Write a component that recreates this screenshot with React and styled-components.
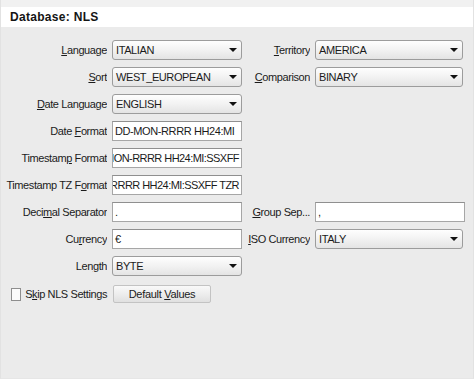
import React from 'react';
import styled, { createGlobalStyle } from 'styled-components';

const Global = createGlobalStyle`
  html, body {
    margin: 0;
    padding: 0;
    background: #ececec;
  }
  body {
    font-family: "Liberation Sans", Arial, sans-serif;
    font-size: 11px;
    color: #1b1b1b;
  }
`;

const Panel = styled.div`
  width: 474px;
  height: 379px;
  box-sizing: border-box;
  padding-top: 7px;
  border-left: 1px solid #e2e2e2;
  border-right: 1px solid #e2e2e2;
  border-bottom: 1px solid #e6e6e6;
  overflow: hidden;
  background: linear-gradient(#f1f1f1 0, #f1f1f1 7px, #ebebeb 7px);
`;

const Header = styled.div`
  height: 20px;
  background: #ffffff;
  display: flex;
  align-items: center;
  padding-left: 9px;
  font-weight: bold;
  font-size: 12px;
  letter-spacing: 0.3px;
  color: #141414;
`;

const Form = styled.div`
  display: grid;
  grid-template-columns: 106px 130px 63px 148px;
  grid-auto-rows: 20px;
  column-gap: 5px;
  row-gap: 7px;
  padding-top: 13px;
`;

const Label = styled.label`
  display: flex;
  align-items: center;
  justify-content: flex-end;
  white-space: nowrap;
  overflow: hidden;
  letter-spacing: -0.4px;
`;

const Key = styled.span`
  text-decoration: underline;
  text-underline-offset: 1px;
`;

const Select = styled.div`
  position: relative;
  box-sizing: border-box;
  height: 20px;
  display: flex;
  align-items: center;
  padding-left: 3px;
  border: 1px solid #9c9c9c;
  border-radius: 3px;
  background: linear-gradient(#fefefe, #f2f2f2 50%, #e4e4e4);
  white-space: nowrap;
  letter-spacing: -0.4px;
  &::after {
    content: '';
    position: absolute;
    right: 4px;
    top: 7px;
    border-left: 4px solid transparent;
    border-right: 4px solid transparent;
    border-top: 4px solid #111;
  }
`;

const Input = styled.div`
  box-sizing: border-box;
  height: 20px;
  display: flex;
  align-items: center;
  justify-content: ${p => (p.$scrolled ? 'flex-end' : 'flex-start')};
  padding: 0 2px;
  border: 1px solid #a6a6a6;
  border-top-color: #8f8f8f;
  background: #ffffff;
  white-space: nowrap;
  overflow: hidden;
  letter-spacing: ${p => (p.$scrolled ? '-0.55px' : '-0.4px')};
  margin-right: ${p => (p.$wide ? '-2px' : '0')};
`;

const Footer = styled.div`
  display: grid;
  grid-template-columns: 106px 98px;
  column-gap: 6px;
  margin-top: 9px;
  height: 18px;
`;

const CheckRow = styled.label`
  display: flex;
  align-items: center;
  padding-left: 10px;
  gap: 4px;
  white-space: nowrap;
  letter-spacing: -0.4px;
`;

const Box = styled.span`
  width: 13px;
  height: 13px;
  box-sizing: border-box;
  border: 1px solid #8e8e8e;
  background: #fbfbfb;
`;

const Button = styled.button`
  height: 18px;
  margin: 0;
  padding: 0;
  font: inherit;
  letter-spacing: -0.3px;
  color: #1b1b1b;
  border: 1px solid #c3c3c3;
  border-radius: 2px;
  background: linear-gradient(#f9f9f9, #ececec 55%, #e0e0e0);
`;

const Empty = styled.div``;

function L({ text, k }) {
  const i = text.indexOf(k);
  return (
    <Label>
      <span>
        {text.slice(0, i)}
        <Key>{k}</Key>
        {text.slice(i + k.length)}
      </span>
    </Label>
  );
}

export default function App() {
  return (
    <>
      <Global />
      <Panel>
        <Header>Database: NLS</Header>
        <Form>
          <L text="Language" k="L" />
          <Select>ITALIAN</Select>
          <L text="Territory" k="T" />
          <Select>AMERICA</Select>

          <L text="Sort" k="S" />
          <Select>WEST_EUROPEAN</Select>
          <L text="Comparison" k="C" />
          <Select>BINARY</Select>

          <L text="Date Language" k="D" />
          <Select>ENGLISH</Select>
          <Empty />
          <Empty />

          <L text="Date Format" k="F" />
          <Input>DD-MON-RRRR HH24:MI</Input>
          <Empty />
          <Empty />

          <L text="Timestamp Format" k="p" />
          <Input $scrolled>DD-MON-RRRR HH24:MI:SSXFF</Input>
          <Empty />
          <Empty />

          <L text="Timestamp TZ Format" k="o" />
          <Input $scrolled>DD-MON-RRRR HH24:MI:SSXFF TZR</Input>
          <Empty />
          <Empty />

          <L text="Decimal Separator" k="m" />
          <Input>.</Input>
          <L text="Group Sep..." k="G" />
          <Input $wide>,</Input>

          <L text="Currency" k="r" />
          <Input>€</Input>
          <L text="ISO Currency" k="I" />
          <Select>ITALY</Select>

          <L text="Length" k="g" />
          <Select>BYTE</Select>
        </Form>
        <Footer>
          <CheckRow>
            <Box />
            <span>
              S<Key>k</Key>ip NLS Settings
            </span>
          </CheckRow>
          <Button>
            Default <Key>V</Key>alues
          </Button>
        </Footer>
      </Panel>
    </>
  );
}
